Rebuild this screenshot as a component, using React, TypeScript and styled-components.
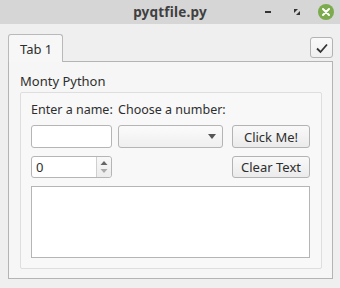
import React from "react";
import styled, { createGlobalStyle } from "styled-components";

const Global = createGlobalStyle`
  html, body { margin: 0; padding: 0; background: #efefef; }
  body { font-family: "Noto Sans", "Open Sans", sans-serif; font-size: 12.5px; color: #2e2e2e; }
  * { box-sizing: border-box; }
`;

const Window = styled.div`
  width: 340px;
  height: 288px;
  display: flex;
  flex-direction: column;
  background: #efefef;
  overflow: hidden;
`;

const TitleBar = styled.div`
  height: 24px;
  flex: none;
  background: #d6d6d6;
  display: grid;
  grid-template-columns: 1fr auto 1fr;
  align-items: center;
`;

const Title = styled.div`
  grid-column: 2;
  font-weight: bold;
  font-size: 13.5px;
  color: #404040;
  letter-spacing: 0.2px;
`;

const Controls = styled.div`
  grid-column: 3;
  justify-self: end;
  display: flex;
  align-items: center;
  gap: 14px;
  padding-right: 5px;
`;

const CtrlIcon = styled.svg`
  display: block;
  flex: none;
`;

const Body = styled.div`
  flex: 1;
  display: flex;
  flex-direction: column;
  padding: 10px 7px 9px 8px;
`;

const TabRow = styled.div`
  display: flex;
  justify-content: space-between;
  align-items: flex-end;
  position: relative;
  z-index: 1;
`;

const Tab = styled.div`
  width: 55px;
  height: 28px;
  border: 1px solid #b9b9b9;
  border-bottom: none;
  border-radius: 3px 3px 0 0;
  background: #f7f7f7;
  padding-left: 11px;
  display: flex;
  align-items: center;
  margin-bottom: -1px;
  font-size: 13px;
`;

const CornerButton = styled.div`
  width: 23px;
  height: 21px;
  margin-bottom: 3px;
  border: 1px solid #b3b3b3;
  border-radius: 3px;
  background: linear-gradient(#f9f9f9, #efefef);
  display: flex;
  align-items: center;
  justify-content: center;
`;

const Pane = styled.div`
  flex: 1;
  border: 1px solid #b4b4b4;
  background: #f6f6f6;
  padding: 9px 10px 9px 11px;
  display: flex;
  flex-direction: column;
`;

const GroupTitle = styled.div`
  font-size: 13px;
  height: 20px;
  line-height: 20px;
  margin-bottom: 1px;
`;

const GroupBox = styled.div`
  flex: 1;
  border: 1px solid #dedede;
  border-radius: 2px;
  background: #f8f8f8;
  padding: 10px 11px 10px 10px;
  display: grid;
  grid-template-columns: 81px 105px 1fr;
  grid-template-rows: 14px 23px 22px 1fr;
  column-gap: 6px;
  row-gap: 8px;
`;

const Label = styled.div`
  align-self: center;
  white-space: nowrap;
  line-height: 14px;
`;

const LineEdit = styled.div`
  border: 1px solid #b5b5b5;
  border-radius: 3px;
  background: #fff;
  display: flex;
  align-items: center;
  padding-left: 4px;
  font-size: 13px;
`;

const Combo = styled.div`
  border: 1px solid #b5b5b5;
  border-radius: 3px;
  background: linear-gradient(#fbfbfb, #efefef);
  display: flex;
  align-items: center;
  justify-content: flex-end;
  padding-right: 6px;
`;

const Button = styled.div`
  justify-self: end;
  width: 78px;
  border: 1px solid #b3b3b3;
  border-radius: 3px;
  background: linear-gradient(#f9f9f9, #ebebeb);
  display: flex;
  align-items: center;
  justify-content: center;
  font-size: 13px;
`;

const Spin = styled.div`
  border: 1px solid #b5b5b5;
  border-radius: 3px;
  background: #fff;
  display: flex;
  font-size: 13px;
`;

const SpinValue = styled.div`
  flex: 1;
  display: flex;
  align-items: center;
  padding-left: 4px;
`;

const SpinButtons = styled.div`
  width: 15px;
  border-left: 1px solid #cfcfcf;
  background: linear-gradient(#f8f8f8, #ececec);
  border-radius: 0 3px 3px 0;
  display: flex;
  align-items: center;
  justify-content: center;
`;

const TextEdit = styled.div`
  grid-column: 1 / -1;
  border: 1px solid #b5b5b5;
  background: #fff;
`;

export default function App() {
  return (
    <>
      <Global />
      <Window>
        <TitleBar>
          <Title>pyqtfile.py</Title>
          <Controls>
            <CtrlIcon width="10" height="10" viewBox="0 0 10 10">
              <rect x="2" y="4" width="6" height="2" fill="#333" />
            </CtrlIcon>
            <CtrlIcon width="12" height="10" viewBox="0 0 12 10" style={{ marginLeft: 4 }}>
              <path d="M3 2 L7 2 L3 6 Z" fill="#333" />
              <path d="M9 8 L5 8 L9 4 Z" fill="#333" />
            </CtrlIcon>
            <CtrlIcon width="18" height="18" viewBox="0 0 18 18">
              <circle cx="9" cy="9" r="8" fill="#7bab4c" />
              <path d="M6 6 L12 12 M12 6 L6 12" stroke="#fff" strokeWidth="2" strokeLinecap="round" />
            </CtrlIcon>
          </Controls>
        </TitleBar>
        <Body>
          <TabRow>
            <Tab>Tab 1</Tab>
            <CornerButton>
              <svg width="14" height="12" viewBox="0 0 14 12">
                <path d="M2 6.5 L5.5 10 L12 2.5" fill="none" stroke="#333" strokeWidth="1.8" />
              </svg>
            </CornerButton>
          </TabRow>
          <Pane>
            <GroupTitle>Monty Python</GroupTitle>
            <GroupBox>
              <Label>Enter a name:</Label>
              <Label>Choose a number:</Label>
              <div />
              <LineEdit />
              <Combo>
                <svg width="8" height="5" viewBox="0 0 8 5">
                  <path d="M0 0 L8 0 L4 5 Z" fill="#555" />
                </svg>
              </Combo>
              <Button>Click Me!</Button>
              <Spin>
                <SpinValue>0</SpinValue>
                <SpinButtons>
                  <svg width="8" height="16" viewBox="0 0 8 16">
                    <path d="M0.5 6 L7.5 6 L4 2 Z" fill="#666" />
                    <path d="M0.5 10 L7.5 10 L4 14 Z" fill="#aaa" />
                  </svg>
                </SpinButtons>
              </Spin>
              <div />
              <Button>Clear Text</Button>
              <TextEdit />
            </GroupBox>
          </Pane>
        </Body>
      </Window>
    </>
  );
}
